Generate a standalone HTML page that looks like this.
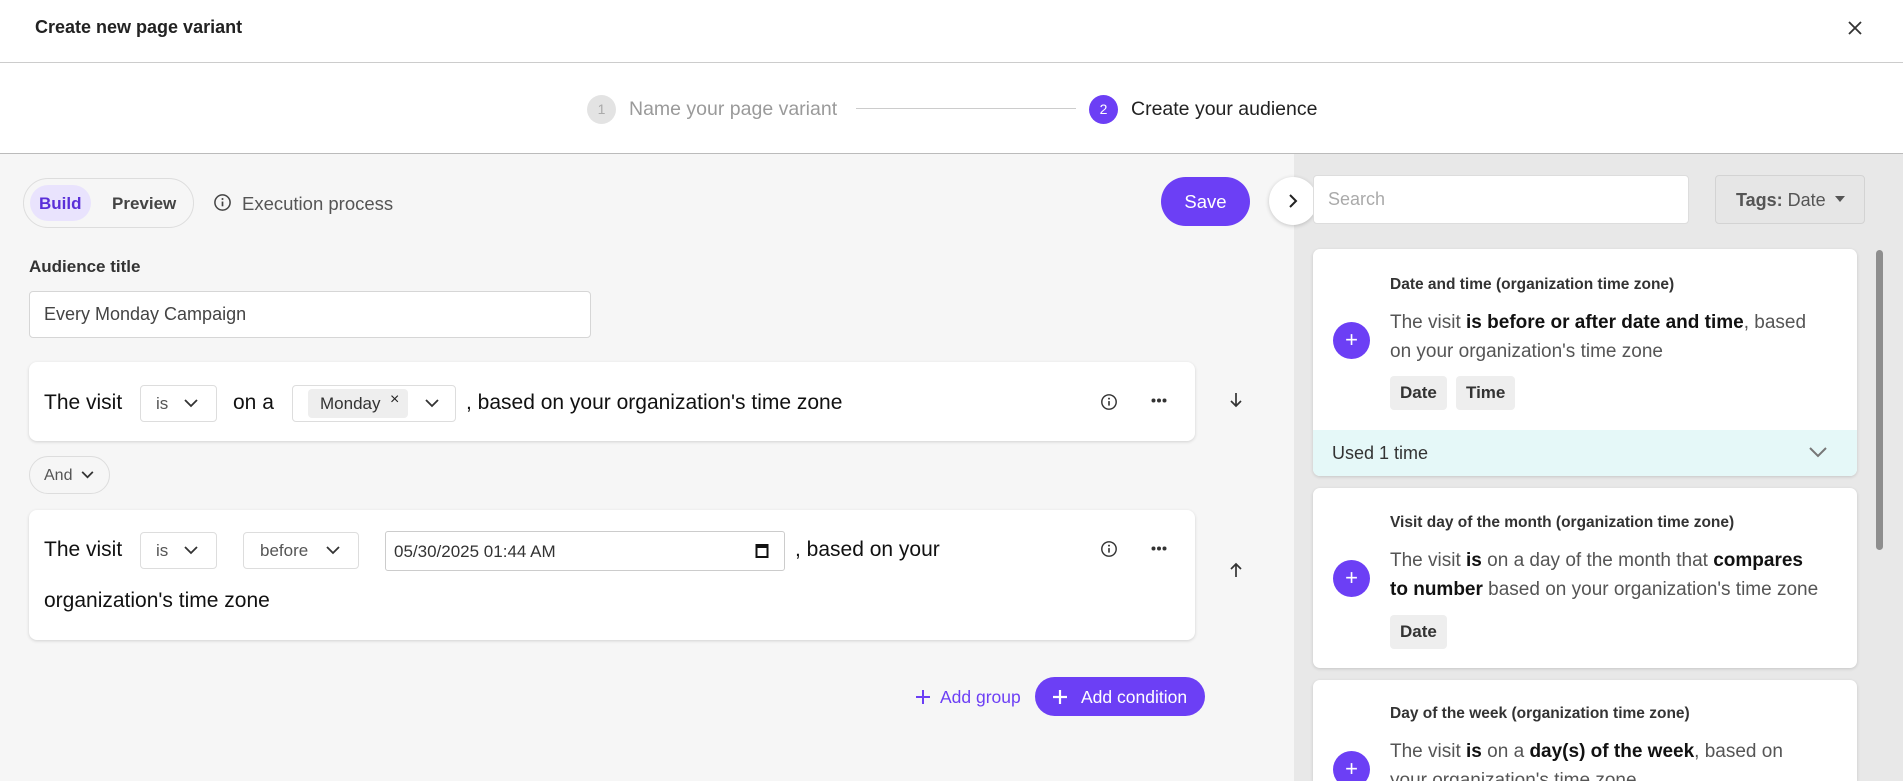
<!DOCTYPE html>
<html style="overflow:hidden"><head><meta charset="utf-8"><style>
*{box-sizing:border-box;margin:0;padding:0}
html,body{width:1903px;height:781px;overflow:hidden}
body{background:#fff;font-family:"Liberation Sans",sans-serif;color:#222;position:relative}
.a{position:absolute}
.t{white-space:nowrap}
.sel{position:absolute;background:#fff;border:1px solid #ddd;border-radius:4px;font-size:17px;color:#555;display:flex;align-items:center}
.card{position:absolute;background:#fff;border-radius:8px;box-shadow:0 1px 3px rgba(0,0,0,.15)}
.rc{position:absolute;left:1313px;width:544px;background:#fff;border-radius:7px;box-shadow:0 1px 3px rgba(0,0,0,.15);overflow:hidden}
.plus{position:absolute;left:1333px;width:37px;height:37px;border-radius:50%;background:#6c3ff5;color:#fff;font-size:22px;text-align:center;line-height:36px}
.rt{position:absolute;left:1390px;font-size:15.5px;font-weight:bold;color:#333}
.rd{position:absolute;left:1390px;font-size:19px;line-height:29px;color:#555;white-space:nowrap}
.rd b{color:#111}
.tag{position:absolute;height:34px;background:#eee;border-radius:4px;font-size:17px;font-weight:bold;color:#333;line-height:34px;padding:0 10px}
</style></head><body>
<div class="a t" style="left:35px;top:17px;font-size:18px;font-weight:bold;color:#222">Create new page variant</div>
<svg class="a" style="left:1848px;top:21px" width="14" height="14" viewBox="0 0 14 14"><path d="M1 1L13 13M13 1L1 13" stroke="#333" stroke-width="1.8"/></svg>
<div class="a" style="left:0;top:62px;width:1903px;height:1px;background:#ccc"></div>
<div class="a" style="left:587px;top:95px;width:29px;height:29px;border-radius:50%;background:#e3e3e3;color:#aaa;font-size:14px;text-align:center;line-height:29px">1</div>
<div class="a t" style="left:629px;top:98px;font-size:19.5px;color:#9a9a9a">Name your page variant</div>
<div class="a" style="left:856px;top:108px;width:220px;height:1px;background:#ccc"></div>
<div class="a" style="left:1089px;top:95px;width:29px;height:29px;border-radius:50%;background:#6c3ff5;color:#fff;font-size:14px;text-align:center;line-height:29px">2</div>
<div class="a t" style="left:1131px;top:98px;font-size:19.5px;color:#222">Create your audience</div>
<div class="a" style="left:0;top:153px;width:1903px;height:1px;background:#bbb"></div>
<div class="a" style="left:0;top:154px;width:1294px;height:627px;background:#f6f6f6"></div>
<div class="a" style="left:1294px;top:154px;width:609px;height:627px;background:#e8e8e8"></div>

<div class="a" style="left:23px;top:178px;width:171px;height:50px;border:1px solid #ddd;border-radius:25px;background:#f6f6f6"></div>
<div class="a" style="left:30px;top:185px;width:61px;height:36px;border-radius:18px;background:#e9e3fd"></div>
<div class="a t" style="left:39px;top:194px;font-size:17px;font-weight:bold;color:#5a2fd8">Build</div>
<div class="a t" style="left:112px;top:194px;font-size:17px;font-weight:bold;color:#444">Preview</div>
<svg class="a" style="left:213px;top:193px" width="19" height="19" viewBox="0 0 20 20"><circle cx="10" cy="10" r="8" fill="none" stroke="#444" stroke-width="1.6"/><path d="M10 9v5" stroke="#444" stroke-width="1.8"/><circle cx="10" cy="6.3" r="1.1" fill="#444"/></svg>
<div class="a t" style="left:242px;top:193px;font-size:18.5px;color:#555">Execution process</div>
<div class="a" style="left:1161px;top:177px;width:89px;height:49px;border-radius:25px;background:#6c3ff5;color:#fff;font-size:18.5px;text-align:center;line-height:49px">Save</div>

<div class="a t" style="left:29px;top:257px;font-size:17px;font-weight:bold;color:#333">Audience title</div>
<div class="a" style="left:29px;top:291px;width:562px;height:47px;background:#fff;border:1px solid #d6d6d6;border-radius:4px"></div>
<div class="a t" style="left:44px;top:304px;font-size:18px;color:#444">Every Monday Campaign</div>

<div class="card" style="left:29px;top:362px;width:1166px;height:79px"></div>
<div class="a t" style="left:44px;top:391px;font-size:21px;color:#111">The visit</div>
<div class="sel" style="left:140px;top:385px;width:77px;height:37px;padding-left:15px">is<svg style="margin-left:16px" width="14" height="9" viewBox="0 0 14 9"><path d="M1 1l6 6 6-6" fill="none" stroke="#333" stroke-width="1.8"/></svg></div>
<div class="a t" style="left:233px;top:391px;font-size:21px;color:#111">on a</div>
<div class="sel" style="left:292px;top:385px;width:164px;height:37px"></div>
<div class="a" style="left:308px;top:389px;width:100px;height:29px;background:#eee;border-radius:4px"></div>
<div class="a t" style="left:320px;top:394px;font-size:17px;color:#333">Monday</div>
<div class="a t" style="left:390px;top:391px;font-size:16px;color:#222">×</div>
<svg class="a" style="left:425px;top:399px" width="14" height="9" viewBox="0 0 14 9"><path d="M1 1l6 6 6-6" fill="none" stroke="#333" stroke-width="1.8"/></svg>
<div class="a t" style="left:466px;top:391px;font-size:21px;color:#111">, based on your organization's time zone</div>
<svg class="a" style="left:1100px;top:393px" width="18" height="18" viewBox="0 0 20 20"><circle cx="10" cy="10" r="8" fill="none" stroke="#333" stroke-width="1.6"/><path d="M10 9v5" stroke="#333" stroke-width="1.8"/><circle cx="10" cy="6.3" r="1.1" fill="#333"/></svg>
<svg class="a" style="left:1151px;top:398px" width="16" height="5" viewBox="0 0 16 5"><circle cx="2.5" cy="2.5" r="2" fill="#333"/><circle cx="8" cy="2.5" r="2" fill="#333"/><circle cx="13.5" cy="2.5" r="2" fill="#333"/></svg>
<svg class="a" style="left:1229px;top:392px" width="14" height="16" viewBox="0 0 14 16"><path d="M7 1v13M2 9l5 5 5-5" fill="none" stroke="#333" stroke-width="1.7"/></svg>

<div class="a" style="left:29px;top:456px;width:81px;height:38px;border:1px solid #ddd;border-radius:19px;background:#f6f6f6"></div>
<div class="a t" style="left:44px;top:467px;font-size:16px;color:#555">And</div>
<svg class="a" style="left:81px;top:471px" width="13" height="8" viewBox="0 0 14 9"><path d="M1 1l6 6 6-6" fill="none" stroke="#333" stroke-width="2"/></svg>

<div class="card" style="left:29px;top:510px;width:1166px;height:130px"></div>
<div class="a t" style="left:44px;top:538px;font-size:21px;color:#111">The visit</div>
<div class="sel" style="left:140px;top:532px;width:77px;height:37px;padding-left:15px">is<svg style="margin-left:16px" width="14" height="9" viewBox="0 0 14 9"><path d="M1 1l6 6 6-6" fill="none" stroke="#333" stroke-width="1.8"/></svg></div>
<div class="sel" style="left:243px;top:532px;width:116px;height:37px;padding-left:16px">before<svg style="margin-left:18px" width="14" height="9" viewBox="0 0 14 9"><path d="M1 1l6 6 6-6" fill="none" stroke="#333" stroke-width="1.8"/></svg></div>
<div class="a" style="left:385px;top:531px;width:400px;height:40px;background:#fff;border:1px solid #ccc;border-radius:3px"></div>
<div class="a t" style="left:394px;top:542px;font-size:17px;color:#333">05/30/2025 01:44 AM</div>
<svg class="a" style="left:755px;top:542px" width="14" height="17" viewBox="0 0 14 17"><rect x="1.5" y="3" width="11" height="12" fill="none" stroke="#111" stroke-width="2"/><rect x="1.5" y="3" width="11" height="3" fill="#111"/></svg>
<div class="a t" style="left:795px;top:538px;font-size:21px;color:#111">, based on your</div>
<div class="a t" style="left:44px;top:589px;font-size:21px;color:#111">organization's time zone</div>
<svg class="a" style="left:1100px;top:540px" width="18" height="18" viewBox="0 0 20 20"><circle cx="10" cy="10" r="8" fill="none" stroke="#333" stroke-width="1.6"/><path d="M10 9v5" stroke="#333" stroke-width="1.8"/><circle cx="10" cy="6.3" r="1.1" fill="#333"/></svg>
<svg class="a" style="left:1151px;top:546px" width="16" height="5" viewBox="0 0 16 5"><circle cx="2.5" cy="2.5" r="2" fill="#333"/><circle cx="8" cy="2.5" r="2" fill="#333"/><circle cx="13.5" cy="2.5" r="2" fill="#333"/></svg>
<svg class="a" style="left:1229px;top:562px" width="14" height="16" viewBox="0 0 14 16"><path d="M7 15V2M2 7l5-5 5 5" fill="none" stroke="#333" stroke-width="1.7"/></svg>

<svg class="a" style="left:915px;top:689px" width="16" height="16" viewBox="0 0 16 16"><path d="M8 1v14M1 8h14" stroke="#6c3ff5" stroke-width="2"/></svg>
<div class="a t" style="left:940px;top:687px;font-size:17.5px;color:#6c3ff5">Add group</div>
<div class="a" style="left:1035px;top:677px;width:170px;height:39px;border-radius:20px;background:#6c3ff5"></div>
<svg class="a" style="left:1052px;top:689px" width="16" height="16" viewBox="0 0 16 16"><path d="M8 1v14M1 8h14" stroke="#fff" stroke-width="2.2"/></svg>
<div class="a t" style="left:1081px;top:687px;font-size:17.5px;color:#fff">Add condition</div>

<div class="a" style="left:1269px;top:177px;width:48px;height:48px;border-radius:50%;background:#fff;box-shadow:0 1px 4px rgba(0,0,0,.2)"></div>
<svg class="a" style="left:1288px;top:194px" width="10" height="14" viewBox="0 0 10 14"><path d="M2 1l6 6-6 6" fill="none" stroke="#222" stroke-width="2"/></svg>
<div class="a" style="left:1313px;top:175px;width:376px;height:49px;background:#fff;border:1px solid #ddd;border-radius:4px"></div>
<div class="a t" style="left:1328px;top:189px;font-size:18px;color:#aaa">Search</div>
<div class="a" style="left:1715px;top:175px;width:150px;height:49px;background:#e6e6e6;border:1px solid #d3d3d3;border-radius:4px"></div>
<div class="a t" style="left:1736px;top:190px;font-size:18px;color:#555"><b>Tags:</b> Date</div>
<svg class="a" style="left:1835px;top:196px" width="10" height="6" viewBox="0 0 10 6"><path d="M0 0h10L5 6z" fill="#555"/></svg>

<div class="rc" style="top:249px;height:227px"><div style="position:absolute;left:0;top:181px;width:100%;height:46px;background:#e5f8f8"></div></div>
<div class="plus" style="top:322px">+</div>
<div class="rt t" style="top:276px">Date and time (organization time zone)</div>
<div class="rd" style="top:308px">The visit <b>is before or after date and time</b>, based<br>on your organization's time zone</div>
<div class="tag" style="left:1390px;top:376px">Date</div>
<div class="tag" style="left:1456px;top:376px">Time</div>
<div class="a t" style="left:1332px;top:443px;font-size:18px;color:#333">Used 1 time</div>
<svg class="a" style="left:1809px;top:447px" width="18" height="11" viewBox="0 0 18 11"><path d="M1 1l8 8 8-8" fill="none" stroke="#777" stroke-width="2"/></svg>

<div class="rc" style="top:488px;height:180px"></div>
<div class="plus" style="top:560px">+</div>
<div class="rt t" style="top:514px">Visit day of the month (organization time zone)</div>
<div class="rd" style="top:546px">The visit <b>is</b> on a day of the month that <b>compares</b><br><b>to number</b> based on your organization's time zone</div>
<div class="tag" style="left:1390px;top:615px">Date</div>

<div class="rc" style="top:680px;height:101px;border-radius:7px 7px 0 0"></div>
<div class="plus" style="top:751px">+</div>
<div class="rt t" style="top:705px">Day of the week (organization time zone)</div>
<div class="rd" style="top:737px">The visit <b>is</b> on a <b>day(s) of the week</b>, based on<br>your organization's time zone</div>

<div class="a" style="left:1876px;top:250px;width:7px;height:300px;border-radius:4px;background:#8e8e8e"></div>
</body></html>
